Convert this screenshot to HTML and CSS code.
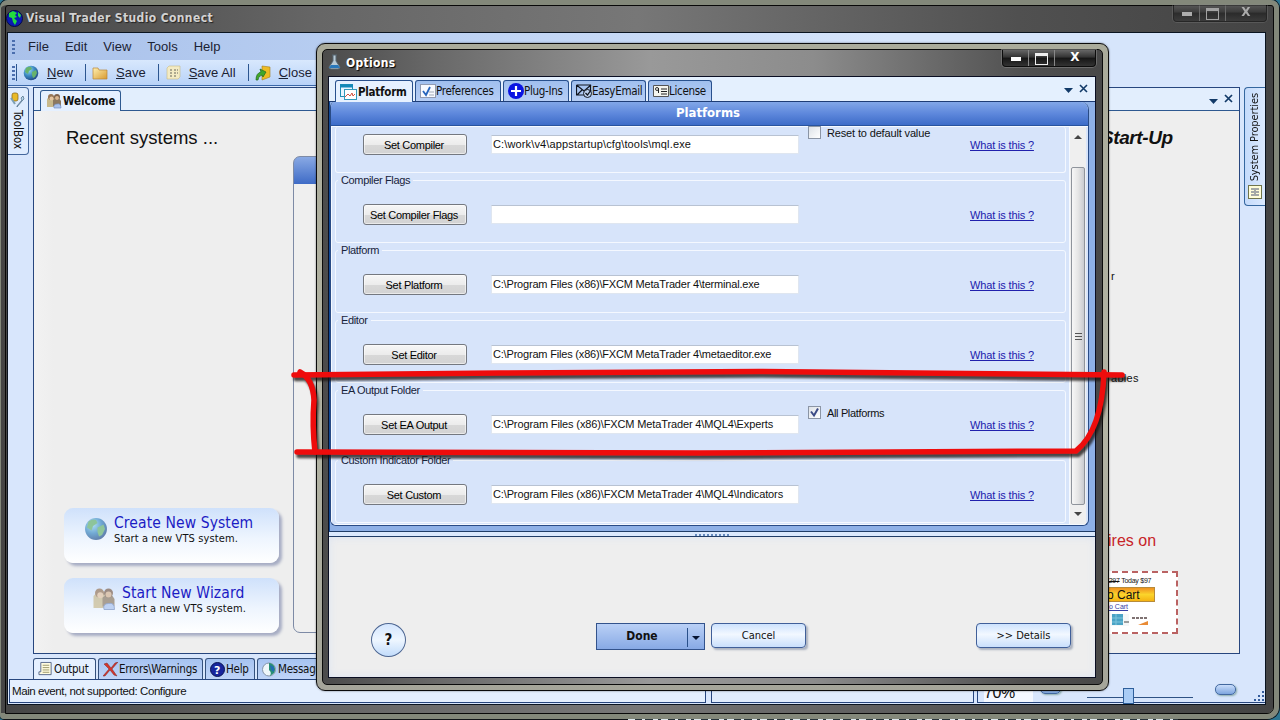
FILE: index.html
```html
<!DOCTYPE html>
<html lang="en">
<head>
<meta charset="utf-8">
<title>Visual Trader Studio Connect</title>
<link rel="stylesheet" href="styles.css">
</head>
<body>
<svg class="defs" width="0" height="0">
  <defs>
    <radialGradient id="gl" cx=".35" cy=".3" r=".8"><stop offset="0" stop-color="#9adcf2"/><stop offset=".5" stop-color="#3b88c0"/><stop offset="1" stop-color="#1b3d7a"/></radialGradient>
    <linearGradient id="fo" x1="0" y1="0" x2="1" y2="1"><stop offset="0" stop-color="#fff0b0"/><stop offset="1" stop-color="#d89a30"/></linearGradient>
    <symbol id="globe" viewBox="0 0 16 16"><circle cx="8" cy="8" r="7.3" fill="url(#gl)"/><path d="M3 3q3-2 5-1l1 2-3 2-1 3-3-2zM9 7l4-2 1 3-2 4-2 1-1-3z" fill="#67b36c"/></symbol>
    <symbol id="people" viewBox="0 0 16 16"><path d="M1 14V6l3-3h4l2 3v8z" fill="#c8b98c"/><path d="M7 13V7l3-2h3l2 3v5z" fill="#8c7960"/><circle cx="5" cy="4" r="3" fill="#987656"/><circle cx="11" cy="4" r="3" fill="#7e604b"/><circle cx="5.500" cy="5.500" r="2" fill="#e5c4a0"/><circle cx="11" cy="5" r="2" fill="#d9b58f"/><path d="M8 15q-1-4 3-4 4-1 4 4z" fill="#a9c2ed" stroke="#6d88bb" stroke-width=".6"/></symbol>
    <symbol id="page" viewBox="0 0 16 16"><path d="M3 1h11v13H1v-3h2z" fill="#fffce0" stroke="#56678b"/><path d="M5 4h7M5 6.5h7M5 9h7M5 11.5h7" stroke="#9a9667"/></symbol>
  </defs>
</svg>
<div class="main-window">
  <header class="titlebar">
    <svg width="17" height="17" viewBox="0 0 17 17"><circle cx="8.5" cy="8.5" r="8" fill="#0b1ab0" stroke="#050b45"/><path d="M3 3l4-2 4 2-2 2 2 2-3 1 3 3-2 4-2-3-1-4-3-1zM12 2l3 3-1 3-2-2z" fill="#22dc3d"/></svg>
    <span class="title">Visual Trader Studio Connect</span>
    <div class="winbtns dim"><i class="mn"></i><i class="mx"></i><i class="cl">X</i></div>
  </header>
  <div class="app">
    <nav class="menubar"><i class="grip"></i><span>File</span><span>Edit</span><span>View</span><span>Tools</span><span>Help</span></nav>
    <div class="toolbar"><i class="grip"></i><i class="sep"></i>
      <svg class="ticon" viewBox="0 0 16 16"><use href="#globe"/></svg><span class="t1"><u>N</u>ew</span><i class="sep"></i>
      <svg class="ticon" viewBox="0 0 16 16"><path d="M1 3h5l1 2h8v9H1z" fill="url(#fo)" stroke="#b88437" stroke-width=".7"/></svg><span class="t2"><u>S</u>ave</span><i class="sep"></i>
      <svg class="ticon" viewBox="0 0 16 16"><path d="M4 1h11v11l-2 2H2V3z" fill="#f3ebc4" stroke="#c7bb85" stroke-width=".6"/><path d="M5 5h2M9 5h2M5 8h2M9 8h2M5 11h2M9 11h2M12 5h1M12 8h1" stroke="#66665c"/></svg><span class="t3"><u>S</u>ave All</span><i class="sep"></i>
      <svg class="ticon" viewBox="0 0 16 16"><path d="M7 1l8 1v10l-8 3z" fill="#edbc24" stroke="#a27c20" stroke-width=".6"/><path d="M1 15q0-7 5-8L5 4l6 3-3 5-1-2q-4 1-4 5z" fill="#41a82b" stroke="#1f661c" stroke-width=".7"/></svg><span class="t4"><u>C</u>lose</span>
    </div>
    <div class="workspace">
      <aside class="leftbar"><div class="sidetab"><svg width="16" height="16" viewBox="0 0 16 16"><rect x="2" y="1" width="6" height="8" rx="2" fill="#e8b929" stroke="#826215" stroke-width=".7"/><path d="M7 14l5-6-1-2 2-2 1 3-2 2-5 6z" fill="#b6d8ee" stroke="#49657f" stroke-width=".7"/><path d="M1 6l4 6" stroke="#7da0b6" stroke-width="2"/></svg><span>ToolBox</span></div></aside>
      <section class="document">
        <div class="dochead"><div class="doctab"><svg width="16" height="16"><use href="#people"/></svg>Welcome</div>
          <svg class="docctl" width="26" height="12" viewBox="0 0 26 12"><path d="M0 5h9l-4.500 5z" fill="#123a68"/><path d="M16 1l7 7M23 1l-7 7" stroke="#123a68" stroke-width="1.700"/></svg></div>
        <div class="welcome">
          <div class="recent"><h1>Recent systems ...</h1>
            <div class="starts">
              <div class="start"><svg width="24" height="24" viewBox="0 0 16 16"><use href="#globe"/></svg><div><b>Create New System</b><small>Start a new VTS system.</small></div></div>
              <div class="start second"><svg width="24" height="24" viewBox="0 0 16 16"><use href="#people"/></svg><div><b>Start New Wizard</b><small>Start a new VTS system.</small></div></div>
            </div></div>
          <div class="card"></div>
          <div class="startup"><h2>Start-Up</h2><p class="frag1">r</p><p class="frag2">ables</p><p class="expire">ires on</p>
            <div class="cart"><div class="price"><s>$297</s> Today $97</div><div class="add">o Cart</div><u>o Cart</u>
              <svg width="40" height="12" viewBox="0 0 40 12"><rect width="18" height="12" fill="#f4f7f8"/><rect x="1" width="11" height="11" fill="#4aa3c5"/><path d="M1 4h11M1 8h11M5 0v11" stroke="#7cc4dc"/><path d="M13 8h5" stroke="#444"/><rect x="20" width="18" height="12" fill="#fff"/><path d="M21 4h3M25 4h3M29 4h3M33 4h3" stroke="#544" stroke-width="1.500"/><path d="M27 11l10-4v4z" fill="#e98b35"/></svg></div>
          </div>
        </div>
      </section>
      <aside class="rightbar"><div class="proptab"><span>System Properties</span><svg width="14" height="14" viewBox="0 0 14 14"><rect x=".5" y=".5" width="13" height="13" fill="#fffdd8" stroke="#70754d"/><path d="M3 4h3M8 4h3M3 7h3M8 7h3M3 10h3M8 10h3M7 3v8" stroke="#4b5577"/></svg></div></aside>
    </div>
    <div class="outtabs">
      <div class="otab on"><svg width="15" height="16" viewBox="0 0 16 16"><use href="#page"/></svg>Output</div>
      <div class="otab err"><svg width="15" height="15" viewBox="0 0 15 15"><path d="M1 2l3-1 4 5 4-5 3-1-6 7 5 7-3-1-4-5-5 6H0l6-7z" fill="#d5352b" stroke="#7a2828" stroke-width=".5"/></svg>Errors\Warnings</div>
      <div class="otab hlp"><svg width="15" height="15"><circle cx="7.500" cy="7.500" r="7" fill="#18259d" stroke="#0a1255"/><text x="4" y="11.500" class="q">?</text></svg>Help</div>
      <div class="otab msg"><svg width="15" height="15" viewBox="0 0 15 15"><circle cx="7" cy="7.500" r="6.500" fill="#eef6fa" stroke="#8795a8"/><path d="M7 1a6.500 6.500 0 015 10L8 14q2-4-1-6z" fill="#278e77"/><path d="M8 3l4 2v5l-3-2z" fill="#216db2"/></svg>Messages</div>
    </div>
    <footer class="status"><div class="cell">Main event, not supported: Configure</div><div class="cell2"></div><div class="zoomer"><span>70%</span><i class="pill p1"></i><div class="slider"><i></i></div><i class="pill p2"></i><svg width="12" height="12" viewBox="0 0 12 12"><path d="M9 1h2v2H9zM5 5h2v2H5zM9 5h2v2H9zM1 9h2v2H1zM5 9h2v2H5zM9 9h2v2H9z" fill="#335c9c"/></svg></div></footer>
  </div>
</div>
<div class="underlay"></div>

<div class="dialog">
 <div class="dframe">
  <header class="dtitle"><svg width="13" height="16" viewBox="0 0 13 16"><path d="M4 1h5M5 1v6L1 13q0 2 2 2h7q2 0 2-2L8 7V1" fill="#b7c9d5" stroke="#566673"/><path d="M3 11h7l2 3H1z" fill="#2877ba"/></svg><span>Options</span><div class="winbtns"><i class="mn"></i><i class="mx"></i><i class="cl">X</i></div></header>
  <div class="dbody">
    <div class="dtabs">
      <div class="dtab sel"><svg width="17" height="16" viewBox="0 0 17 16"><rect x=".5" y=".5" width="12" height="12" fill="#eaf6ff" stroke="#208fb3"/><path d="M0 2h13" stroke="#1389b8" stroke-width="3"/><rect x="4.500" y="5.500" width="12" height="10" fill="#fff" stroke="#329abb"/><path d="M5 13l3-3 2 2 2-3 1 3 2-2" fill="none" stroke="#d45240"/></svg>Platform</div>
      <div class="dtab pref"><svg width="16" height="14" viewBox="0 0 16 14"><rect x=".5" y=".5" width="15" height="13" fill="#f8faff" stroke="#929bb1"/><path d="M3 7l3 4 4-8" fill="none" stroke="#2765bc" stroke-width="1.800"/><path d="M9 8h5M9 11h5" stroke="#a1aab7"/></svg>Preferences</div>
      <div class="dtab plug"><svg width="16" height="16"><circle cx="8" cy="8" r="8" fill="#0a14e2"/><path d="M8 3v10M3 8h10" stroke="#fff" stroke-width="2.200"/></svg>Plug-Ins</div>
      <div class="dtab mail"><svg width="16" height="14" viewBox="0 0 16 14"><path d="M.5 1h14v7M.5 1v10H8M.5 1L8 7l7-6M1 11l5-5" fill="none" stroke="#10151f" stroke-width="1.200"/><circle cx="11.500" cy="9.500" r="4" fill="#bdd0ee" stroke="#10151f"/><path d="M9.500 9l2 2L15 6" fill="none" stroke="#10151f" stroke-width="1.300"/></svg>EasyEmail</div>
      <div class="dtab lic"><svg width="16" height="12" viewBox="0 0 16 12"><path d="M.5.5h15v11H.5z" fill="#f5f5ee" stroke="#555"/><circle cx="4" cy="4" r="1.500" fill="none" stroke="#333"/><path d="M5.500 3v5M8 4h6M8 6.500h6M8 9h6" stroke="#222"/></svg>License</div>
      <svg class="dctl" width="26" height="12" viewBox="0 0 26 12"><path d="M0 5h9L4.500 10z" fill="#123a68"/><path d="M16 2l7 7M23 2l-7 7" stroke="#123a68" stroke-width="1.600"/></svg>
    </div>
    <div class="upper"><div class="panel"><h3>Platforms</h3>
      <div class="scroll"><div class="groups">
        <section class="group first"><button>Set Compiler</button><div class="field w1">C:\work\v4\appstartup\cfg\tools\mql.exe</div><div class="check"><i></i><span class="cw">Reset to default value</span></div><a>What is this ?</a></section>
        <section class="group"><h4>Compiler Flags</h4><button>Set Compiler Flags</button><div class="field"></div><div class="check"></div><a>What is this ?</a></section>
        <section class="group"><h4>Platform</h4><button>Set Platform</button><div class="field">C:\Program Files (x86)\FXCM MetaTrader 4\terminal.exe</div><div class="check"></div><a>What is this ?</a></section>
        <section class="group"><h4>Editor</h4><button>Set Editor</button><div class="field">C:\Program Files (x86)\FXCM MetaTrader 4\metaeditor.exe</div><div class="check"></div><a>What is this ?</a></section>
        <section class="group"><h4>EA Output Folder</h4><button>Set EA Output</button><div class="field w2">C:\Program Files (x86)\FXCM MetaTrader 4\MQL4\Experts</div><div class="check"><i><svg width="11" height="11" viewBox="0 0 11 11"><path d="M2 4.500l3 4 4-7" fill="none" stroke="#3c4b85" stroke-width="2"/></svg></i><span>All Platforms</span></div><a>What is this ?</a></section>
        <section class="group"><h4>Custom Indicator Folder</h4><button>Set Custom</button><div class="field w2">C:\Program Files (x86)\FXCM MetaTrader 4\MQL4\Indicators</div><div class="check"></div><a>What is this ?</a></section>
      </div>
      <div class="sbar"><svg width="8" height="4" viewBox="0 0 8 4"><path d="M0 4h8L4 0z" fill="#444"/></svg><div class="thumb"><i></i><i></i><i></i></div><svg width="8" height="4" viewBox="0 0 8 4"><path d="M0 0h8L4 4z" fill="#444"/></svg></div></div>
    </div></div>
    <div class="splitter"><i></i><i></i><i></i><i></i><i></i><i></i><i></i><i></i><i></i></div>
    <div class="lower"><div class="qbtn">?</div><div class="done"><span>Done</span><em><svg width="8" height="4"><path d="M0 0h8L4 4z" fill="#061432"/></svg></em></div><div class="btn">Cancel</div><div class="btn det">&gt;&gt; Details</div></div>
  </div>
 </div>
</div>

<svg class="mark" width="1280" height="720" viewBox="0 0 1280 720">
  <g fill="none" stroke-linecap="round" stroke-linejoin="round" stroke-width="5.500">
    <g stroke="#18120f" opacity=".75" transform="translate(2 3.500)" class="soft"><path id="t" d="M294 375L500 373L760 371.500L1122 375"/><path id="l" d="M300 372Q313 379 314 400Q312 425 315 452"/><path id="b" d="M297 452L700 453L1076 451Q1102 430 1104 372"/></g>
    <g stroke="#ee0c0c"><use href="#t"/><use href="#l"/><use href="#b"/></g>
  </g>
</svg>
</body>
</html>
```
FILE: styles.css
```css
*{box-sizing:border-box}
body{margin:0;width:1280px;height:720px;overflow:hidden;background:#2b7592;font-family:"Liberation Sans",Arial,sans-serif;font-size:11px;color:#111;position:relative}
h1,h2,h3,h4,p{margin:0;font-weight:normal}
i{font-style:normal;display:block}
svg{flex:none;display:block}
.defs{position:absolute}

/* main window */
.main-window{position:absolute;left:0;top:0;width:1279px;height:719px;border:solid #83887a;border-width:5px 6px 6px 1px;border-radius:8px 8px 12px 4px;background:linear-gradient(90deg,#454545,#666 25%,#777 50%,#505050 80%,#444);box-shadow:0 0 0 1px #101418;padding:0 6px 7px;outline:1px solid #080808;outline-offset:-6px}
.titlebar{height:27px;display:flex;align-items:flex-start;padding:5px 0 0 0;margin-left:-1px}
.title{font:bold 12px "DejaVu Sans Condensed",sans-serif;color:#d2d2d2;margin:1px auto 0 3px;line-height:14px;letter-spacing:.38px;text-shadow:1px 1px 1px #222}
.winbtns{display:flex;height:17px;border:1px solid #0c0c0c;border-top:0;border-radius:0 0 4px 4px;background:linear-gradient(#666,#333 45%,#151515 50%,#333);color:#fff;box-shadow:0 0 0 1px #8888}
.winbtns i{width:26px;border-right:1px solid #888;height:16px}
.winbtns .mn,.winbtns .mx{display:flex;justify-content:center;padding-top:3px}
.winbtns .mn::before{content:"";width:10px;height:4px;background:#fff;margin-top:4px}
.winbtns .mx::before{content:"";width:11px;height:8px;border:1px solid #eee;border-top-width:3px}
.winbtns .cl{width:40px;border:0;font:bold 12px/15px "DejaVu Sans",sans-serif;text-align:center}
.dim{opacity:.55;margin-top:-5px}
.app{height:673px;border:1px solid #0a1420;background:#d8e6fc;display:flex;flex-direction:column;width:1259px;overflow:hidden}
.menubar{height:27px;display:flex;align-items:center;font-size:13px;background:linear-gradient(90deg,#a9c1ea,#b9cff2 30%,#d6e5fb 70%);padding-left:4px;color:#1b2233}
.menubar span{margin-right:16px}
.menubar .grip{margin-right:13px}
.grip{width:3px;height:14px;background:repeating-linear-gradient(#4b6eae 0 2px,transparent 2px 4px);flex:none}
.toolbar{height:26px;display:flex;align-items:center;font-size:13px;padding-left:4px;background:linear-gradient(#d8e8fd,#b8d2f8);border-bottom:1px solid #3a67a8;width:900px;color:#1b2233}
.sep{width:1px;height:17px;background:#2c5690;margin-left:1px;flex:none}
.ticon{width:16px;height:16px;margin-left:6px}
.toolbar span{margin:0 11px 0 8px;white-space:nowrap}
.toolbar .t3{margin-right:11px}
.workspace{display:flex;height:568px;padding-top:1px}
.leftbar{width:25px;flex:none}
.sidetab{width:21px;height:68px;border:1px solid #43669c;border-left:0;border-radius:0 4px 4px 0;background:#dfecfe;padding:4px 0 0 2px;font:11.500px/15px "DejaVu Sans Condensed",sans-serif}
.sidetab span{writing-mode:vertical-rl;display:block;margin-top:2px;white-space:nowrap}
.document{width:1207px;border:1px solid #27467e;display:flex;flex-direction:column;background:#eee}
.dochead{height:23px;border-bottom:1px solid #2e5990;background:#e2eefd;display:flex;justify-content:space-between}
.doctab{margin:2px 0 -1px 6px;width:81px;height:21px;border:1px solid #2e5990;border-bottom:0;border-radius:3px 3px 0 0;background:#e5f0ff;display:flex;align-items:center;gap:1px;padding-left:5px;font:bold 11.500px "DejaVu Sans Condensed",sans-serif}
.docctl{margin:6px 4px 0 0}
.welcome{flex:1;display:flex;padding-top:17px;background:linear-gradient(90deg,#f2f2f2,#eee 20px)}
.recent{width:259px;padding-left:32px;flex:none}
h1{font-size:18.500px;line-height:20px}
.starts{margin:360px 0 0 -2px;display:flex;flex-direction:column;gap:15px}
.start{width:215px;height:55px;border-radius:9px;background:linear-gradient(#cfe1fb,#eef5fe 55%,#fff);box-shadow:3px 3px 3px #a7adc4;display:flex;padding:5px 0 0 20px;gap:6px}
.start svg{margin-top:4px;opacity:.68}
.second{padding-left:28px}
.start b{display:block;font:15.500px/20px "DejaVu Sans Condensed",sans-serif;color:#1c1cc4;white-space:nowrap;letter-spacing:.1px}
.start small{display:block;font:11px/13px "DejaVu Sans Condensed",sans-serif;letter-spacing:.12px;margin-top:-1px}
.card{width:720px;height:477px;margin-top:28px;border:1px solid #7d8aa5;border-radius:7px;background:linear-gradient(#89a9e4,#3e6bc6 27px,#efefef 27px);flex:none}
.startup{margin-left:88px;width:140px}
h2{font-size:19px;font-weight:bold;font-style:italic;line-height:20px;letter-spacing:-.4px;color:#111;white-space:nowrap}
.frag1{margin:122px 0 0 10px;line-height:12px}
.frag2{margin:90px 0 0 10px;line-height:12px;letter-spacing:.3px}
.expire{font-size:16px;line-height:20px;color:#c72428;margin:147px 0 0 7px}
.cart{border:2px dashed #ba6262;width:116px;height:63px;margin:20px 0 0 -39px;background:#fff;padding:4px 0 0 38px;font-size:7px;line-height:8px}
.price{margin-left:3px;letter-spacing:-.25px;white-space:nowrap}
.add{width:53px;height:15px;background:linear-gradient(#ef9020,#fbd42b 50%,#f5b312);border:1px solid #b78b3a;font-size:12px;line-height:14px;padding-left:4px;margin:2px 0 1px}
.cart u{color:#3540a5;margin-left:7px;display:block}
.cart svg{margin:3px 0 0 9px}
.rightbar{flex:1;padding-left:4px}
.proptab{width:22px;height:119px;border:1px solid #35679f;border-right:0;border-radius:4px 0 0 4px;background:linear-gradient(90deg,#c5dbfb,#dceaff);display:flex;flex-direction:column;align-items:center;justify-content:space-between;padding:5px 1px 6px 0}
.proptab span{writing-mode:vertical-rl;transform:rotate(180deg);font:11px/14px "DejaVu Sans Condensed",sans-serif;white-space:nowrap;letter-spacing:-.1px}
.outtabs{height:25px;display:flex;gap:2px;padding:4px 0 0 25px;font:11.500px "DejaVu Sans Condensed",sans-serif;letter-spacing:-.25px}
.otab{height:21px;border:1px solid #35517c;border-bottom:0;border-radius:3px 3px 0 0;background:linear-gradient(#a6c3f1,#c0d5f8);display:flex;align-items:center;gap:1px;padding-left:4px;white-space:nowrap}
.on{width:63px;background:#e5f0ff}.err{width:105px}.hlp{width:50px}.msg{width:90px}
.q{font:bold 11px "DejaVu Sans",sans-serif;fill:#fff}
.status{height:24px;display:flex;gap:4px;font-size:11.500px}
.cell{width:698px;margin-left:1px;border:1px solid #27467e;line-height:23px;padding-left:2px;background:#e4effe;letter-spacing:-.42px}
.cell2{width:264px;margin-left:1px;border:1px solid #27467e;background:#e0ecfd}
.zoomer{flex:1;display:flex;border-left:1px solid #27467e;border-bottom:1px solid #27467e;padding-left:6px;align-items:center;margin-left:-1px}
.zoomer span{font-size:16px;background:#f4f8ff;width:49px;padding-top:4px;letter-spacing:-.4px}
.pill{width:21px;height:11px;border-radius:5px;border:1px solid #42689f;background:linear-gradient(#c9ddfb,#7ea6df);box-shadow:1px 1px 2px #8aa}
.p1{margin:-4px 0 0 7px}
.slider{width:106px;height:1px;background:#2e5284;margin:13px 22px 0 26px}
.slider i{width:11px;height:16px;border:1px solid #2e5f9b;background:#a9ccf5;margin:-9px 0 0 36px}
.p2{margin-top:-2px}.zoomer svg{margin:10px 0 0 17px}
.underlay{position:absolute;left:628px;top:719px;width:550px;height:1px;background:repeating-linear-gradient(90deg,#dce7ed 0 7px,#26333a 7px 14px,#dce7ed 14px 17px,#26333a 17px 25px,#dce7ed 25px 30px,#26333a 30px 33px)}

/* options dialog */
.dialog{position:absolute;left:316px;top:43px;width:793px;height:648px;border:1px solid #0b0b0b;border-radius:9px;background:linear-gradient(#aaab9b,#b3b4a4 60%,#a5a59a);padding:5px;box-shadow:0 0 2px #0008}
.dframe{height:636px;border:1px solid #0b0b0b;border-radius:5px;background:linear-gradient(90deg,#4b4b4b,#686868 14%,#999 42%,#8c8c8c 63%,#505050 90%,#484848);padding:0 5px 6px}
.dtitle{height:26px;display:flex;align-items:flex-start;color:#fff;font:bold 12px/16px "DejaVu Sans Condensed",sans-serif}
.dtitle svg{margin:4px 5px 0 0}.dtitle span{margin:5px auto 0 0;text-shadow:1px 1px 1px #000;letter-spacing:.3px}
.dtitle .winbtns{margin-right:1px}
.dbody{height:602px;border:1px solid #0a0e22;background:#c6daf8;display:flex;flex-direction:column;width:768px}
.dtabs{height:25px;border-bottom:1px solid #1e3d76;display:flex;gap:2px;padding:3px 0 0 6px;background:#e4f0fe;font:11.500px "DejaVu Sans Condensed",sans-serif;letter-spacing:-.3px}
.dtab{height:21px;border:1px solid #28508d;border-bottom:0;border-radius:3px 3px 0 0;background:linear-gradient(#a0bfee,#b6cef5);display:flex;align-items:center;padding-left:4px;white-space:nowrap}
.sel{width:78px;background:#e6f1ff;font-weight:bold;height:22px;letter-spacing:-.25px;gap:1px}.pref{width:86px}.plug{width:66px}.mail{width:75px}.lic{width:64px}
.dctl{margin:3px 5px 0 auto}
.upper{height:430px;padding:0 6px 6px 0;background:#8eb0e6;border-left:1px solid #124a96;border-bottom:1px solid #203d68}
.panel{height:424px;border:1px solid #294b85;border-top:0;border-radius:5px 8px 6px 6px;background:#d7e4fa;overflow:hidden}
h3{height:24px;background:linear-gradient(#82a7e8,#5e88dc 50%,#3d6cc8);border-bottom:1px solid #28539e;color:#fff;font:bold 13px/22px "DejaVu Sans Condensed",sans-serif;text-align:center;padding-right:3px}
.scroll{height:399px;display:flex;border:1px solid #f5f9ff;border-right:0}
.groups{width:738px;flex:none;padding:0 3px 0 3px;border-right:1px solid #f5f9ff}
.group{height:63px;margin-bottom:7px;border:1px solid #f4f8ff;border-radius:3px;display:grid;grid-template-columns:128px 317px 162px 80px;padding-left:27px;grid-template-rows:1fr;position:relative;align-items:start}
.group:last-child{margin:0}
.first{height:46px;border-top:0}
h4{position:absolute;left:2px;top:-7px;font-size:11px;line-height:13px;padding:0 3px;background:#d7e4fa;letter-spacing:-.35px;color:#17233b}
button{margin:23px 0 0;width:104px;height:21px;padding:0 2px 0 0;border:1px solid #74787f;border-radius:3px;background:linear-gradient(#f6f6f6,#ececec 50%,#d8d8d8 52%,#d3d3d3);font:11px "Liberation Sans",sans-serif;letter-spacing:-.3px;box-shadow:inset 0 0 0 1px #fff8}
.field{margin-top:24px;width:308px;height:19px;background:#fff;border:1px solid #dfe6f0;border-top-color:#b8c2d2;line-height:17px;padding-left:1px;letter-spacing:-.19px;white-space:nowrap}
.check{display:flex;align-items:center;gap:6px;margin-top:15px;height:13px;letter-spacing:-.35px}
.check i{width:13px;height:13px;border:1px solid #8b95a5;background:linear-gradient(135deg,#dde2e8,#fff)}
.group a{color:#2020ad;text-decoration:underline;margin-top:28px;line-height:13px;letter-spacing:-.15px}
.first button{margin-top:7px}.first .field{margin-top:8px}.first .check{margin-top:0;height:11px;letter-spacing:-.15px}.first a{margin-top:12px}
.field.w1{letter-spacing:.14px}.field.w2{letter-spacing:-.13px}
.sbar{width:16px;background:#efefef;display:flex;flex-direction:column;align-items:center;padding:8px 0;justify-content:space-between}
.thumb{width:14px;height:338px;border:1px solid #8f949c;border-radius:2px;background:linear-gradient(90deg,#f7f7f7,#e6e6e6 50%,#c9cbd0);display:flex;flex-direction:column;align-items:center;justify-content:center;gap:2px;margin-top:18px;margin-bottom:-3px}
.thumb i{width:7px;height:1px;background:#555}
.splitter{height:5px;background:#dbe9fd;border-bottom:1px solid #203d68;display:flex;justify-content:center;gap:2px;padding:2px 0 0}
.splitter i{width:2px;height:2px;background:#6489bd}
.lower{flex:1;display:flex;padding:86px 24px 0 42px;background:#eee;box-shadow:inset 0 0 8px #dce4f2}
.qbtn{width:35px;height:34px;border:1px solid #4c6591;border-radius:50%;background:linear-gradient(#d4e6fe,#eef6ff 50%,#c2dcfb);font:bold 15px/32px "DejaVu Sans Condensed",sans-serif;text-align:center}
.done{width:109px;height:27px;margin-left:190px;border:1px solid #33538c;background:linear-gradient(#bad0f6,#88aae5);display:flex;font:bold 12px/25px "DejaVu Sans Condensed",sans-serif}
.done span{width:90px;text-align:center}
.done em{height:19px;width:17px;margin-top:4px;border-left:1px solid #29508a;display:flex;align-items:center;justify-content:center}
.btn{width:95px;height:25px;margin-left:6px;border:1px solid #405f99;border-radius:4px;background:linear-gradient(#cde2fd,#f2f8ff 45%,#c9dffc);font:11px/23px "DejaVu Sans Condensed",sans-serif;text-align:center;box-shadow:2px 2px 2px #aab1bf}
.det{margin-left:auto}
.mark{position:absolute;left:0;top:0}
.soft{filter:blur(1px)}
```
